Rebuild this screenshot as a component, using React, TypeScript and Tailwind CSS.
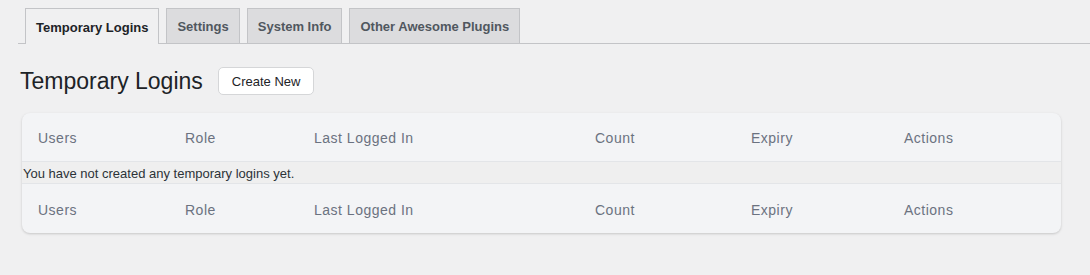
import React from "react";

const tabs = ["Temporary Logins", "Settings", "System Info", "Other Awesome Plugins"];
const columns = ["Users", "Role", "Last Logged In", "Count", "Expiry", "Actions"];

function HeaderRow({ border }: { border: "top" | "bottom" }) {
  return (
    <div
      className={`grid grid-cols-[147px_129px_281px_156px_153px_1fr] h-[49px] items-center pt-[3px] ${
        border === "bottom" ? "border-b border-[#e3e5e8]" : ""
      }`}
    >
      {columns.map((col) => (
        <div key={col} className="px-4 text-[14px] tracking-[0.5px] text-[#6b7280]">
          {col}
        </div>
      ))}
    </div>
  );
}

export default function App() {
  return (
    <div className="min-h-screen bg-[#f0f0f1] pl-[18px] font-['Liberation_Sans',Arial,sans-serif]">
      {/* Tabs */}
      <div className="flex items-end pt-2 border-b border-[#c3c4c7]">
        {tabs.map((tab, i) => (
          <div
            key={tab}
            className={`ml-[7px] h-[35px] px-[10px] pt-[2px] flex items-center border border-b-0 border-[#c3c4c7] text-[13px] font-bold ${
              i === 0
                ? "bg-[#f0f0f1] text-[#1d2327] -mb-px h-[36px]"
                : "bg-[#dcdcde] text-[#50575e]"
            }`}
          >
            {tab}
          </div>
        ))}
      </div>

      {/* Title */}
      <div className="flex items-center mt-[22px] pl-[2px]">
        <h1 className="text-[23px] leading-[30px] font-normal text-[#1d2327]">Temporary Logins</h1>
        <button className="ml-[15px] h-[28px] px-[13px] pt-[2px] bg-white border border-[#d5d6d8] rounded-[5px] text-[13px] text-[#1d2327]">
          Create New
        </button>
      </div>

      {/* Table */}
      <div className="mt-[17px] ml-[4px] mr-[29px] rounded-lg bg-[#f3f4f6] overflow-hidden shadow-[0_1px_3px_rgba(0,0,0,0.13),0_1px_2px_rgba(0,0,0,0.05)]">
        <HeaderRow border="bottom" />
        <div className="h-[22px] flex items-center pl-px pt-[2px] bg-[#efefef] border-b border-[#e3e5e8] text-[13px] text-[#2c3338]">
          You have not created any temporary logins yet.
        </div>
        <HeaderRow border="top" />
      </div>
    </div>
  );
}
